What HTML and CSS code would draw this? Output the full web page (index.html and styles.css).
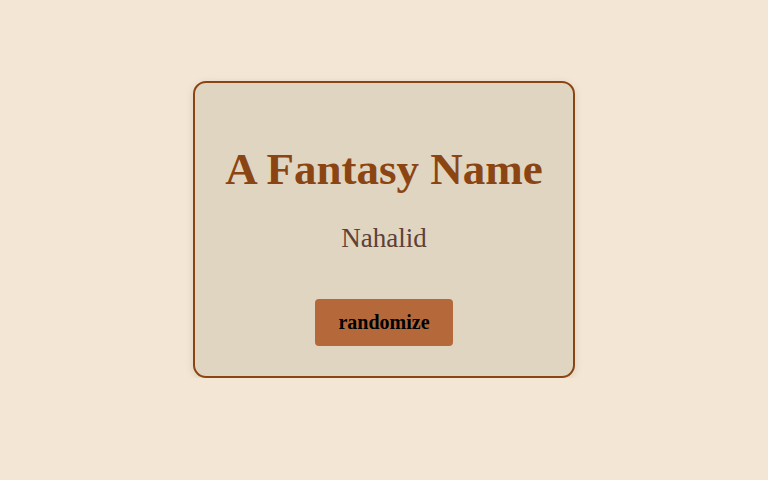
FILE: index.html
```html
<!DOCTYPE html>
<html lang="en">
<head>
    <meta charset="UTF-8">
    <meta name="viewport" content="width=device-width, initial-scale=1.0">
    <title>Fantasy Name Generator</title>
    <link rel="stylesheet" href="styles.css">
</head>
<body>
    <div class="card">
        <h1>A Fantasy Name</h1>
        <p id="name" class="name">Nahalid</p>
        <button onclick="randomize()">randomize</button>
    </div>
    <script>
        const starts = ['Na', 'El', 'Tho', 'Ka', 'Mor', 'Ara', 'Ze', 'Lu'];
        const middles = ['ha', 'ri', 'ven', 'do', 'la', 'thi'];
        const ends = ['lid', 'wen', 'dor', 'rim', 'sha', 'nor'];
        const nameEl = document.getElementById('name');

        function pick(list) {
            return list[Math.floor(Math.random() * list.length)];
        }

        function randomize() {
            nameEl.textContent = pick(starts) + pick(middles) + pick(ends);
        }
    </script>
</body>
</html>
```

FILE: styles.css
```css
body {
    margin: 0;
    padding: 81px 0 0;
    background-color: #f4e6d4;
    font-family: "Liberation Serif", "Times New Roman", serif;
}

.card {
    box-sizing: border-box;
    width: 382px;
    margin: 0 auto;
    padding: 0 30px 30px;
    background-color: #e0d5c1;
    border: 2px solid #8b4513;
    border-radius: 13px;
    box-shadow: 0 2px 8px rgba(0, 0, 0, 0.1);
    display: flex;
    flex-direction: column;
    align-items: center;
    text-align: center;
}

.card h1 {
    margin: 60px 0 28px;
    font-size: 45px;
    font-weight: bold;
    color: #8b4513;
    white-space: nowrap;
}

.name {
    margin: 0 0 45px;
    font-size: 27px;
    color: #5d4037;
}

button {
    background-color: #b5693a;
    color: black;
    border: none;
    border-radius: 4px;
    padding: 12px 23px;
    font-family: "Liberation Serif", "Times New Roman", serif;
    font-size: 20px;
    font-weight: bold;
    cursor: pointer;
}
```
